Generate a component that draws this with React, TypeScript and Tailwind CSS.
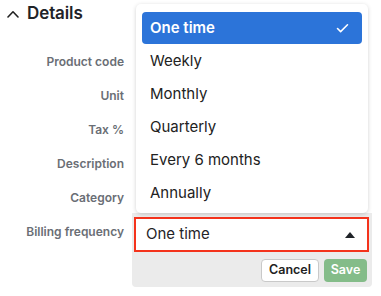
import { Check } from "lucide-react";

const labels = ["Product code", "Unit", "Tax %", "Description", "Category", "Billing frequency"];
const options = ["One time", "Weekly", "Monthly", "Quarterly", "Every 6 months", "Annually"];

export default function App() {
  return (
    <div
      className="relative w-[381px] h-[296px] overflow-hidden bg-white text-[#1f2328]"
      style={{ fontFamily: "Inter, 'Noto Sans', sans-serif" }}
    >
      {/* Header */}
      <div className="flex items-center h-[28px] pl-[7px] gap-[8px]">
        <svg width="12" height="8" viewBox="0 0 12 8" fill="none" stroke="#222" strokeWidth="1.6" strokeLinecap="round" strokeLinejoin="round">
          <path d="M1 7 L6 1.8 L11 7" />
        </svg>
        <span className="text-[17px] font-semibold tracking-[-0.1px]">Details</span>
      </div>

      <div className="flex mt-[17px]">
        {/* Labels */}
        <div className="w-[124px] flex flex-col items-end">
          {labels.map((l) => (
            <div key={l} className="h-[34px] flex items-center text-[12px] font-semibold text-[#6a6e75]">
              {l}
            </div>
          ))}
        </div>

        {/* Field column */}
        <div className="flex-1 flex flex-col pl-[8px] pr-[9px]">
          <div className="h-[168px] shrink-0" />
          <div className="bg-[#ebebeb] rounded-b-[4px] pl-[2px] pr-[3px] pt-[4px] pb-[5px]">
            <div className="h-[35px] bg-white border-2 border-[#f4331c] flex items-center justify-between pl-[10px] pr-[12px]">
              <span className="text-[15px]">One time</span>
              <svg width="10" height="6" viewBox="0 0 10 6">
                <path d="M0 6 L5 0 L10 6 Z" fill="#1f2328" />
              </svg>
            </div>
            <div className="flex justify-end gap-[5px] mt-[7px] pr-[2px]">
              <button className="h-[23px] w-[58px] bg-white border border-[#c9c9c9] rounded-[4px] text-[12.5px] font-semibold text-[#222]">
                Cancel
              </button>
              <button className="h-[23px] w-[43px] bg-[#84bc89] rounded-[4px] text-[12.5px] font-semibold text-white">
                Save
              </button>
            </div>
          </div>
        </div>
      </div>

      {/* Dropdown menu */}
      <div className="absolute left-[136px] top-[4px] w-[232px] h-[209px] bg-white rounded-[5px] shadow-[0_1px_4px_rgba(0,0,0,0.18)] pt-[8px] px-[6px]">
        {options.map((o, i) => (
          <div
            key={o}
            className={
              i === 0
                ? "h-[32px] mb-[1px] flex items-center justify-between pl-[8px] pr-[12px] rounded-[4px] bg-[#2c74d9] text-white font-semibold text-[15px]"
                : "h-[33px] flex items-center pl-[8px] text-[15px] text-[#222]"
            }
          >
            <span>{o}</span>
            {i === 0 && <Check size={15} strokeWidth={2.5} />}
          </div>
        ))}
      </div>
    </div>
  );
}
